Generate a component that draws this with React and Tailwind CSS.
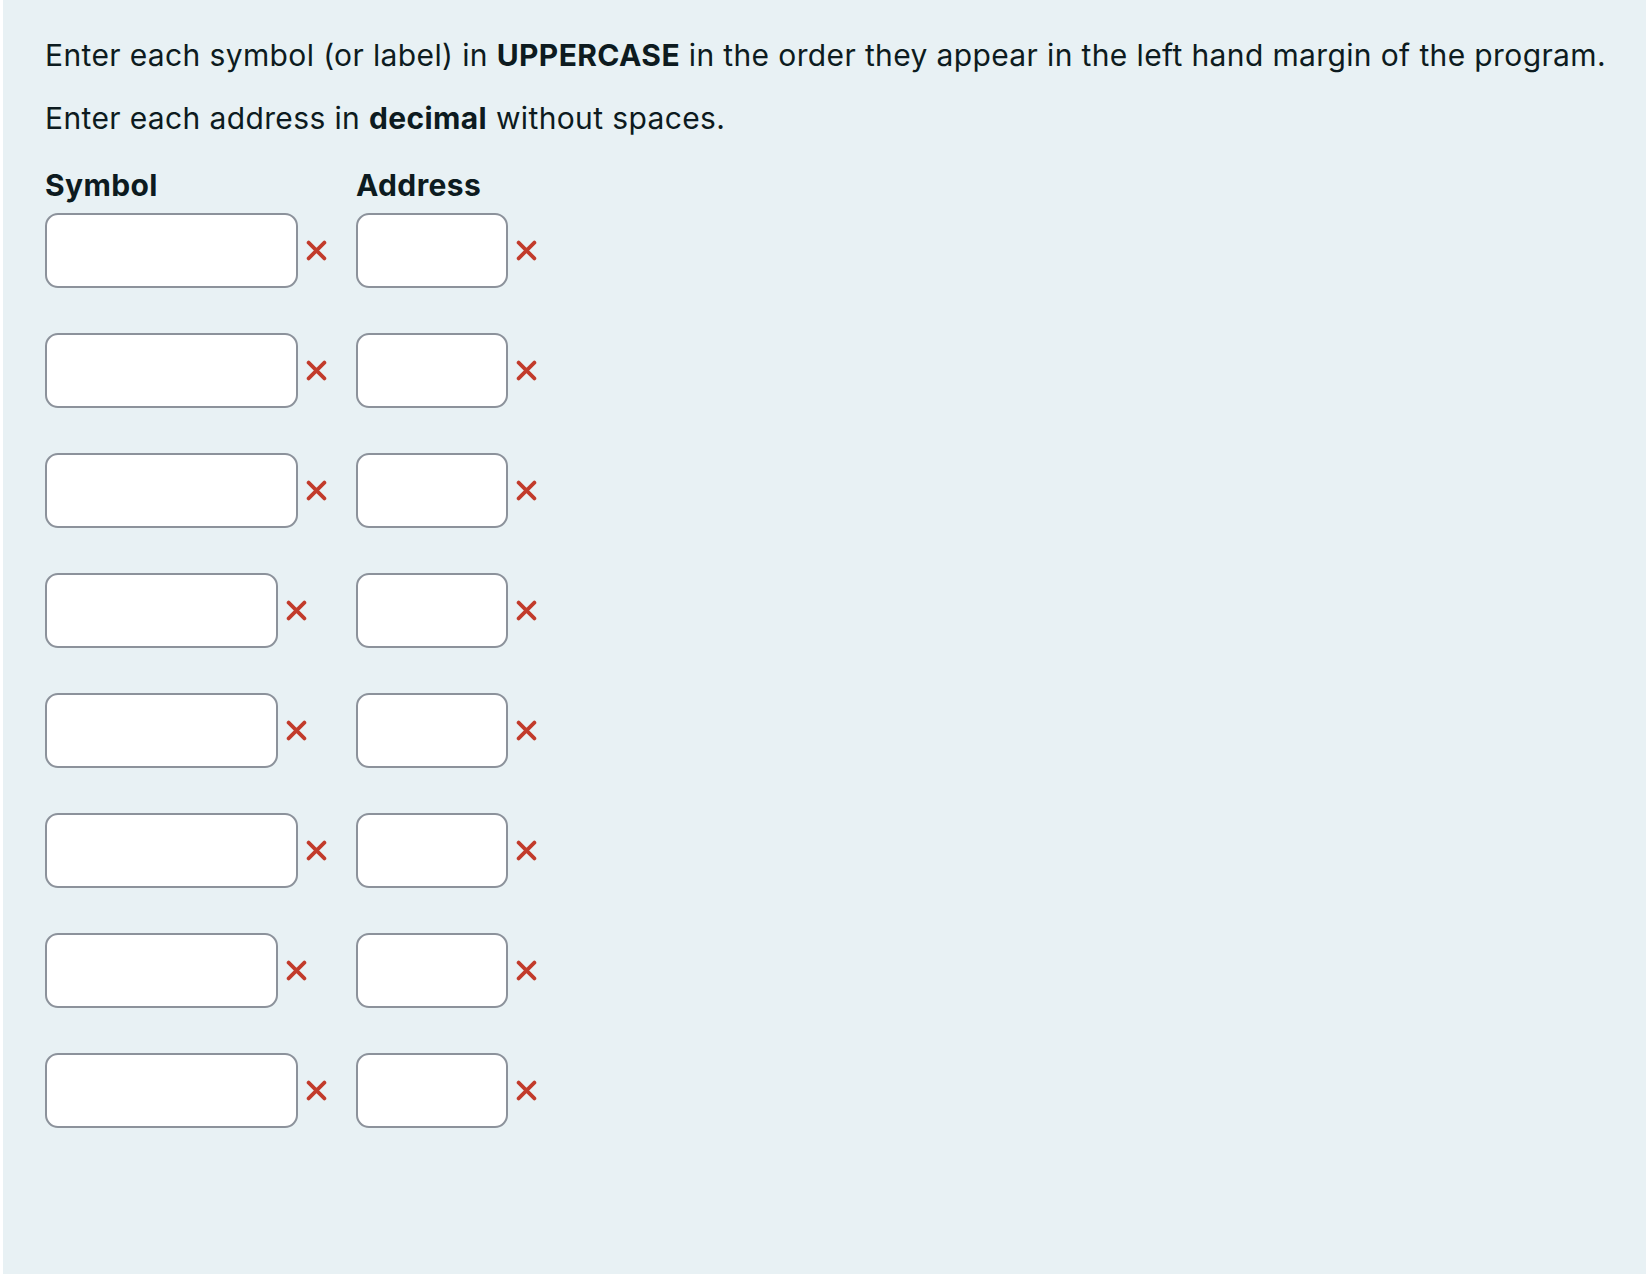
import React from 'react';

const rows = [
  { wide: true },
  { wide: true },
  { wide: true },
  { wide: false },
  { wide: false },
  { wide: true },
  { wide: false },
  { wide: true },
];

const WrongMark = () => (
  <svg viewBox="0 0 20 20" className="w-[21px] h-[21px] shrink-0 ml-[8px]">
    <path d="M2.5 2.5 L17.5 17.5 M17.5 2.5 L2.5 17.5" stroke="#c23b2b" strokeWidth="3.6" strokeLinecap="round" fill="none" />
  </svg>
);

const Field = ({ width }) => (
  <div className="flex items-center">
    <input
      type="text"
      className={`${width} h-[75px] bg-white border-2 border-[#8c929b] rounded-[13px] outline-none`}
    />
    <WrongMark />
  </div>
);

export default function App() {
  return (
    <div
      className="min-h-screen bg-[#e8f1f4] border-l-[3px] border-white pl-[42px] pt-[35px] text-[#0d1b20] tracking-[0.37px]"
      style={{ fontFamily: 'Inter, "Liberation Sans", sans-serif' }}
    >
      <p className="text-[30px] leading-[40px]">
        Enter each symbol (or label) in <strong className="font-bold">UPPERCASE</strong> in the order they appear in the left hand margin of the program.
      </p>
      <p className="text-[30px] leading-[40px] mt-[23px]">
        Enter each address in <strong className="font-bold">decimal</strong> without spaces.
      </p>

      <div className="flex mt-[27px] text-[30px] leading-[40px] font-bold">
        <div className="w-[311px]">Symbol</div>
        <div>Address</div>
      </div>

      <div className="flex flex-col gap-[45px] mt-[8px]">
        {rows.map((row, i) => (
          <div key={i} className="flex items-center">
            <div className="w-[311px]">
              <Field width={row.wide ? 'w-[253px]' : 'w-[233px]'} />
            </div>
            <Field width="w-[152px]" />
          </div>
        ))}
      </div>
    </div>
  );
}
